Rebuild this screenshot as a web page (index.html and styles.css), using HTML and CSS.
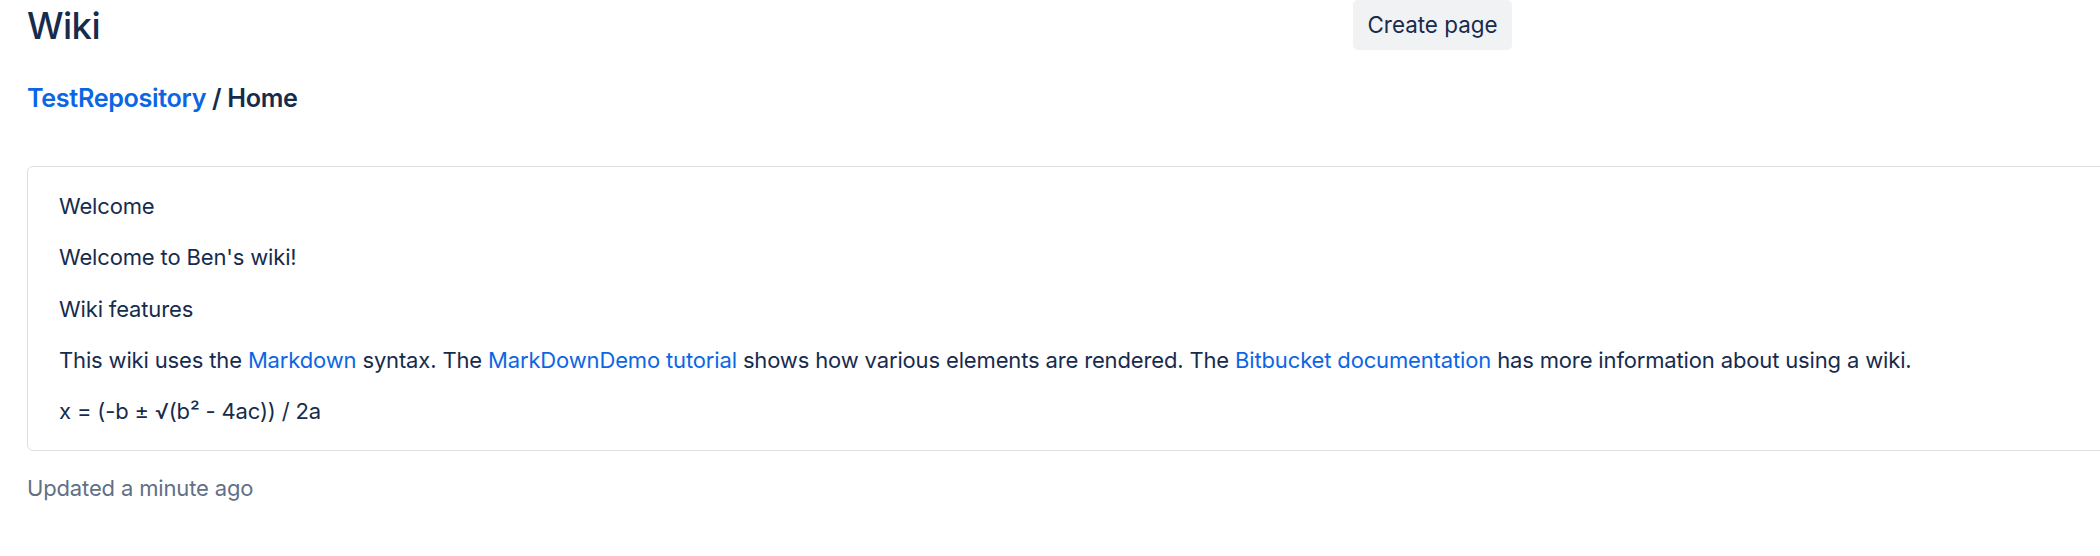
FILE: index.html
```html
<!DOCTYPE html>
<html lang="en">
<head>
<meta charset="utf-8">
<title>Wiki</title>
<link rel="stylesheet" href="styles.css">
</head>
<body>
<div class="page">
  <header class="page-header">
    <h1 class="title">Wiki</h1>
    <button class="btn" type="button">Create page</button>
  </header>
  <nav class="breadcrumb"><a href="#" class="crumb-link">TestRepository</a> / Home</nav>
  <article class="wiki-box">
    <p>Welcome</p>
    <p>Welcome to Ben's wiki!</p>
    <p>Wiki features</p>
    <p>This wiki uses the <a href="#">Markdown</a> syntax. The <a href="#">MarkDownDemo tutorial</a> shows how various elements are rendered. The <a href="#">Bitbucket documentation</a> has more information about using a wiki.</p>
    <p>x = (-b ± √(b² - 4ac)) / 2a</p>
  </article>
  <p class="updated">Updated a minute ago</p>
</div>
</body>
</html>
```
FILE: styles.css
```css
html, body {
  margin: 0;
  padding: 0;
  background: #ffffff;
}
body {
  font-family: Inter, "Noto Sans", "Liberation Sans", sans-serif;
  color: #172b4d;
  font-size: 22px;
  line-height: 32px;
  letter-spacing: -0.15px;
  overflow: hidden;
}
.page {
  width: 2200px;
  padding-left: 27px;
}
.page-header {
  display: flex;
  justify-content: space-between;
  align-items: flex-start;
  width: 1485px;
  height: 50px;
}
.title {
  margin: 0;
  font-size: 36.5px;
  font-weight: 500;
  line-height: 48px;
  margin-top: 2px;
  letter-spacing: -0.6px;
}
.btn {
  font-family: inherit;
  font-size: 22.4px;
  font-weight: 400;
  color: #172b4d;
  background: #f1f2f4;
  border: none;
  border-radius: 5px;
  height: 50px;
  width: 159px;
  padding: 0;
  line-height: 50px;
}
.breadcrumb {
  margin-top: 31px;
  font-size: 25.2px;
  font-weight: 600;
  line-height: 34px;
  letter-spacing: -0.35px;
}
.crumb-link {
  color: #0c66e4;
  text-decoration: none;
}
.wiki-box {
  margin-top: 51px;
  width: 2200px;
  border: 1px solid #dcdfe4;
  border-radius: 6px;
  padding: 4px 32px 23px 31px;
  box-sizing: border-box;
}
.wiki-box p {
  margin: 19.2px 0 0;
}
.wiki-box a {
  color: #0c66e4;
  text-decoration: none;
}
.updated {
  margin: 21px 0 0;
  color: #626f86;
  font-size: 22px;
}
```
